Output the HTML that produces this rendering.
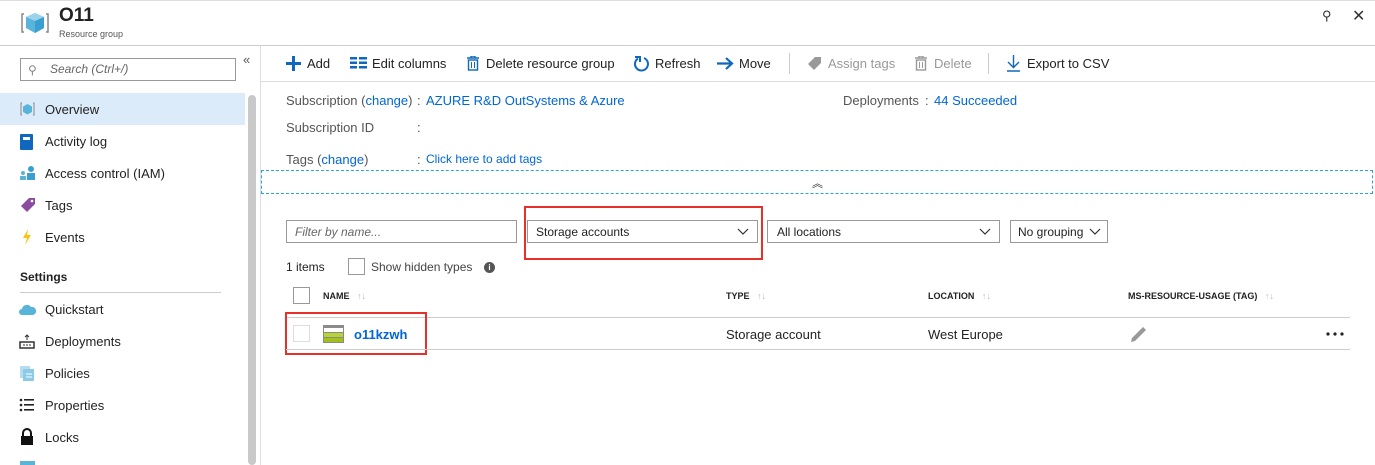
<!DOCTYPE html>
<html><head><meta charset="utf-8"><style>
*{margin:0;padding:0;box-sizing:border-box}
body{width:1375px;height:465px;overflow:hidden;background:#fff;font-family:"Liberation Sans",sans-serif;font-size:13px;color:#222;position:relative}
.a{position:absolute;white-space:nowrap}
.blue{color:#0066d6}
.g{color:#555}
.nav .a{font-size:13px}
.hd{font-size:9px;font-weight:bold;color:#222}
.sort{color:#bbb;font-size:9px}
.box{position:absolute;border:1px solid #999;background:#fff}
.red{position:absolute;border:2px solid #e8302a}
</style></head><body>
<div class="a" style="left:0;top:0;width:1375px;height:1px;background:#ddd"></div>
<svg class="a" style="left:20px;top:11px" width="30" height="24" viewBox="0 0 30 24"><path d="M4 3 L2 3 L2 21 L4 21" fill="none" stroke="#888" stroke-width="1.5"/><path d="M26 3 L28 3 L28 21 L26 21" fill="none" stroke="#888" stroke-width="1.5"/><path d="M15 2 L24 6 L24 17 L15 22 L6 17 L6 6 Z" fill="#59b4d9"/><path d="M6 6 L15 10 L24 6 L15 2Z" fill="#9cd3ec"/><path d="M15 10 L15 22 L24 17 L24 6Z" fill="#3a9fd0"/></svg>
<div class="a" style="left:59px;top:5px;font-size:19px;font-weight:bold">O11</div>
<div class="a" style="left:59px;top:29px;font-size:9px;color:#555">Resource group</div>
<div class="a" style="left:1322px;top:8px;font-size:13px;color:#333">⚲</div>
<div class="a" style="left:1352px;top:6px;font-size:16px;color:#333">✕</div>
<div class="a" style="left:0;top:45px;width:1375px;height:1px;background:#ccc"></div>
<div class="box" style="left:20px;top:58px;width:216px;height:23px;border-color:#999"></div>
<div class="a" style="left:28px;top:63px;font-size:12px;color:#888">⚲</div>
<div class="a" style="left:50px;top:62px;font-size:12px;color:#666;font-style:italic">Search (Ctrl+/)</div>
<div class="a" style="left:243px;top:52px;font-size:13px;color:#555">«</div>
<div class="a" style="left:0;top:93px;width:245px;height:32px;background:#dcebf9"></div>
<div class="a" style="left:248px;top:95px;width:8px;height:370px;background:#c9c9c9;border-radius:4px"></div>
<div class="a" style="left:260px;top:46px;width:1px;height:419px;background:#ddd"></div>
<div class="nav">
<svg class="a" style="left:20px;top:102px" width="15" height="14"><path d="M2 1H1V13H2M13 1H14V13H13" stroke="#888" fill="none"/><path d="M7.5 2L12 4.5V10L7.5 12.5L3 10V4.5Z" fill="#59b4d9"/></svg>
<div class="a" style="left:45px;top:102px">Overview</div>
<div class="a" style="left:20px;top:134px;width:13px;height:16px;background:#0f68bd;border-radius:1px"></div><div class="a" style="left:23px;top:137px;width:7px;height:3px;background:#fff"></div>
<div class="a" style="left:45px;top:134px">Activity log</div>
<svg class="a" style="left:19px;top:165px" width="18" height="16"><circle cx="12" cy="4" r="3" fill="#3a9fd0"/><rect x="8" y="8" width="8" height="7" fill="#3a9fd0"/><circle cx="4" cy="8" r="2" fill="#59b4d9"/><rect x="1" y="11" width="6" height="4" fill="#59b4d9"/></svg>
<div class="a" style="left:45px;top:166px">Access control (IAM)</div>
<svg class="a" style="left:20px;top:197px" width="16" height="16"><path d="M1 9L9 1H15V7L7 15Z" fill="#8a4c9e"/><circle cx="12" cy="4" r="1.3" fill="#fff"/></svg>
<div class="a" style="left:45px;top:198px">Tags</div>
<svg class="a" style="left:22px;top:229px" width="10" height="16"><path d="M6 0L1 9H5L3 16L9 6H5Z" fill="#f8c413"/></svg>
<div class="a" style="left:45px;top:230px">Events</div>
<div class="a" style="left:20px;top:270px;font-size:12px;font-weight:bold">Settings</div>
<div class="a" style="left:20px;top:292px;width:201px;height:1px;background:#ccc"></div>
<svg class="a" style="left:19px;top:304px" width="17" height="12"><path d="M3 11a3 3 0 0 1 0-6a5 5 0 0 1 9-2a4 4 0 0 1 2 8Z" fill="#59b4d9"/></svg>
<div class="a" style="left:45px;top:302px">Quickstart</div>
<svg class="a" style="left:19px;top:334px" width="16" height="16"><path d="M8 1V6M6 3L8 1L10 3" stroke="#333" fill="none"/><rect x="1" y="8" width="14" height="6" fill="none" stroke="#333" stroke-width="1.5"/><path d="M4 11h2M7 11h2M10 11h2" stroke="#333"/></svg>
<div class="a" style="left:45px;top:334px">Deployments</div>
<svg class="a" style="left:19px;top:365px" width="16" height="17"><rect x="1" y="1" width="10" height="12" fill="#b7dcf0"/><rect x="4" y="4" width="11" height="12" fill="#8ccbe8"/><path d="M7 9h6M7 12h6" stroke="#fff"/></svg>
<div class="a" style="left:45px;top:366px">Policies</div>
<svg class="a" style="left:19px;top:398px" width="16" height="14"><g fill="#222"><circle cx="2" cy="2" r="1.3"/><circle cx="2" cy="7" r="1.3"/><circle cx="2" cy="12" r="1.3"/><rect x="5" y="1" width="10" height="1.6"/><rect x="5" y="6" width="10" height="1.6"/><rect x="5" y="11" width="10" height="1.6"/></g></svg>
<div class="a" style="left:45px;top:398px">Properties</div>
<svg class="a" style="left:20px;top:428px" width="14" height="17"><path d="M3 8V5a4 4 0 0 1 8 0V8" stroke="#111" stroke-width="2" fill="none"/><rect x="1" y="8" width="12" height="9" fill="#111"/></svg>
<div class="a" style="left:45px;top:430px">Locks</div>
<div class="a" style="left:20px;top:461px;width:15px;height:4px;background:#59b4d9"></div>
</div>
<div class="a" style="left:261px;top:81px;width:1114px;height:1px;background:#ddd"></div>
<svg class="a" style="left:286px;top:56px" width="15" height="15"><path d="M7.5 0V15M0 7.5H15" stroke="#0f68bd" stroke-width="3"/></svg>
<div class="a" style="left:307px;top:56px">Add</div>
<svg class="a" style="left:350px;top:57px" width="17" height="12"><g fill="#0f68bd"><rect x="0" y="0" width="7" height="2.5"/><rect x="0" y="4.5" width="7" height="2.5"/><rect x="0" y="9" width="7" height="2.5"/><rect x="9" y="0" width="8" height="2.5"/><rect x="9" y="4.5" width="8" height="2.5"/><rect x="9" y="9" width="8" height="2.5"/></g></svg>
<div class="a" style="left:372px;top:56px">Edit columns</div>
<svg class="a" style="left:467px;top:56px" width="12" height="15"><path d="M0 2H12M4 2V0H8V2" stroke="#0f68bd" stroke-width="1.4" fill="none"/><rect x="1.5" y="4" width="9" height="10" fill="none" stroke="#0f68bd" stroke-width="1.4"/><path d="M4.5 6V12M7.5 6V12" stroke="#0f68bd"/></svg>
<div class="a" style="left:486px;top:56px">Delete resource group</div>
<svg class="a" style="left:633px;top:55px" width="17" height="17"><path d="M5 3.5A6.5 6.5 0 1 0 11 3" fill="none" stroke="#0f68bd" stroke-width="2"/><path d="M2 2H7V7" fill="none" stroke="#0f68bd" stroke-width="2"/></svg>
<div class="a" style="left:655px;top:56px">Refresh</div>
<svg class="a" style="left:717px;top:57px" width="17" height="13"><path d="M0 6.5H15M9 1L15 6.5L9 12" stroke="#0f68bd" stroke-width="2.2" fill="none"/></svg>
<div class="a" style="left:739px;top:56px">Move</div>
<div class="a" style="left:789px;top:53px;width:1px;height:21px;background:#ccc"></div>
<svg class="a" style="left:807px;top:56px" width="15" height="15"><path d="M1 8L8 1H14V7L7 14Z" fill="#999"/></svg>
<div class="a" style="left:828px;top:56px;color:#999">Assign tags</div>
<svg class="a" style="left:915px;top:56px" width="12" height="15"><path d="M0 2H12M4 2V0H8V2" stroke="#999" stroke-width="1.4" fill="none"/><rect x="1.5" y="4" width="9" height="10" fill="none" stroke="#999" stroke-width="1.4"/><path d="M4.5 6V12M7.5 6V12" stroke="#999"/></svg>
<div class="a" style="left:934px;top:56px;color:#999">Delete</div>
<div class="a" style="left:988px;top:53px;width:1px;height:21px;background:#ccc"></div>
<svg class="a" style="left:1007px;top:55px" width="13" height="17"><path d="M6.5 0V12M1 7L6.5 12.5L12 7M0 16H13" stroke="#0f68bd" stroke-width="1.4" fill="none"/></svg>
<div class="a" style="left:1027px;top:56px">Export to CSV</div>
<div class="a g" style="left:286px;top:93px">Subscription (<span class="blue">change</span>)</div>
<div class="a g" style="left:417px;top:93px">:</div>
<div class="a blue" style="left:426px;top:93px">AZURE R&amp;D OutSystems &amp; Azure</div>
<div class="a g" style="left:286px;top:120px">Subscription ID</div>
<div class="a g" style="left:417px;top:120px">:</div>
<div class="a g" style="left:286px;top:152px">Tags (<span class="blue">change</span>)</div>
<div class="a g" style="left:417px;top:152px">:</div>
<div class="a blue" style="left:426px;top:152px;font-size:12px">Click here to add tags</div>
<div class="a g" style="left:843px;top:93px">Deployments</div>
<div class="a g" style="left:925px;top:93px">:</div>
<div class="a blue" style="left:934px;top:93px">44 Succeeded</div>
<div class="a" style="left:261px;top:170px;width:1112px;height:24px;border:1px dashed #27a7d8"></div>
<div class="a" style="left:812px;top:175px;font-size:11px">︽</div>
<div class="box" style="left:286px;top:220px;width:231px;height:23px"></div>
<div class="a" style="left:295px;top:225px;font-size:12px;color:#666;font-style:italic">Filter by name...</div>
<div class="box" style="left:527px;top:220px;width:231px;height:23px"></div>
<div class="a" style="left:536px;top:225px;font-size:12px">Storage accounts</div>
<svg class="a" style="left:737px;top:228px" width="12" height="7"><path d="M1 1L6 6L11 1" stroke="#333" fill="none" stroke-width="1.2"/></svg>
<div class="red" style="left:524px;top:206px;width:239px;height:54px"></div>
<div class="box" style="left:767px;top:220px;width:233px;height:23px"></div>
<div class="a" style="left:777px;top:225px;font-size:12px">All locations</div>
<svg class="a" style="left:979px;top:228px" width="12" height="7"><path d="M1 1L6 6L11 1" stroke="#333" fill="none" stroke-width="1.2"/></svg>
<div class="box" style="left:1010px;top:220px;width:98px;height:23px"></div>
<div class="a" style="left:1018px;top:225px;font-size:12px">No grouping</div>
<svg class="a" style="left:1089px;top:228px" width="12" height="7"><path d="M1 1L6 6L11 1" stroke="#333" fill="none" stroke-width="1.2"/></svg>
<div class="a" style="left:286px;top:260px;font-size:12px">1 items</div>
<div class="box" style="left:348px;top:258px;width:17px;height:17px"></div>
<div class="a" style="left:371px;top:260px;font-size:12px;color:#444">Show hidden types</div>
<div class="a" style="left:484px;top:262px;width:11px;height:11px;border-radius:50%;background:#555;color:#fff;font-size:8px;font-weight:bold;text-align:center;line-height:11px">i</div>
<div class="box" style="left:293px;top:287px;width:17px;height:17px"></div>
<div class="a hd" style="left:323px;top:291px">NAME <span class="sort">&nbsp;&nbsp;↑↓</span></div>
<div class="a hd" style="left:726px;top:291px">TYPE <span class="sort">&nbsp;&nbsp;↑↓</span></div>
<div class="a hd" style="left:928px;top:291px">LOCATION <span class="sort">&nbsp;&nbsp;↑↓</span></div>
<div class="a hd" style="left:1128px;top:291px">MS-RESOURCE-USAGE (TAG) <span class="sort">&nbsp;&nbsp;↑↓</span></div>
<div class="a" style="left:286px;top:317px;width:1064px;height:1px;background:#ccc"></div>
<div class="box" style="left:293px;top:325px;width:17px;height:17px;border-color:#ddd"></div>
<svg class="a" style="left:323px;top:325px" width="21" height="18"><rect width="21" height="18" fill="#8a8a8a"/><rect x="1" y="3" width="19" height="4" fill="#fff"/><rect x="1" y="8" width="19" height="4" fill="#b8d432"/><rect x="1" y="13" width="19" height="4" fill="#a2c11c"/></svg>
<div class="a blue" style="left:354px;top:327px;font-weight:bold">o11kzwh</div>
<div class="red" style="left:285px;top:312px;width:142px;height:43px"></div>
<div class="a" style="left:726px;top:327px">Storage account</div>
<div class="a" style="left:928px;top:327px">West Europe</div>
<svg class="a" style="left:1129px;top:324px" width="20" height="19"><path d="M3 14L14 3L17 6L6 17L2 18Z" fill="#999"/></svg>
<svg class="a" style="left:1326px;top:332px" width="18" height="4"><circle cx="2" cy="2" r="1.6" fill="#222"/><circle cx="9" cy="2" r="1.6" fill="#222"/><circle cx="16" cy="2" r="1.6" fill="#222"/></svg>
<div class="a" style="left:286px;top:349px;width:1064px;height:1px;background:#ccc"></div>
</body></html>
